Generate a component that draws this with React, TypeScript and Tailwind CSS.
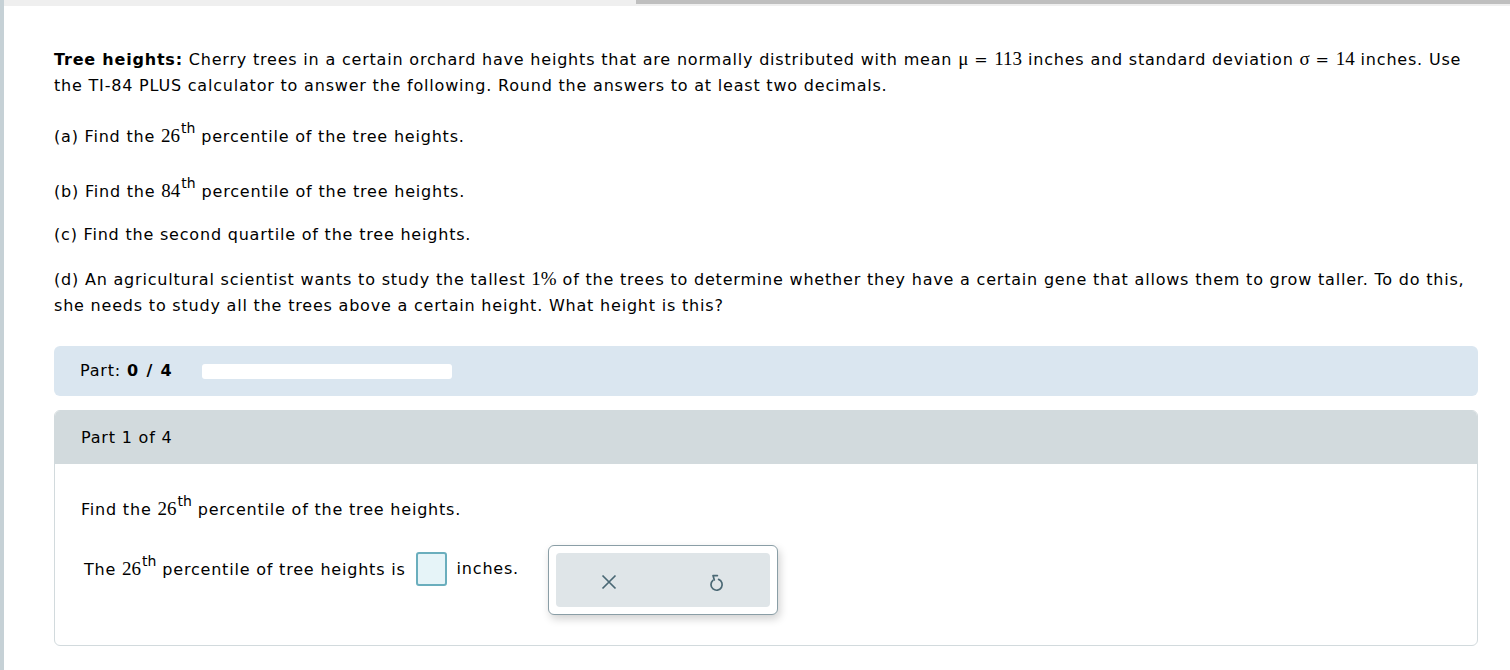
import React from "react";

const sans = { fontFamily: '"DejaVu Sans", Verdana, sans-serif' };

function Num({ children }: { children: React.ReactNode }) {
  return (
    <span className="text-[19px] tracking-normal" style={{ fontFamily: '"Liberation Serif", "Times New Roman", serif' }}>
      {children}
    </span>
  );
}

function Th() {
  return <span className="relative -top-[9px] text-[14px] ml-[1px] tracking-normal">th</span>;
}

function UndoIcon() {
  return (
    <svg width="20" height="22" viewBox="0 0 20 22">
      <path d="M6.9 9.4 A5.6 5.6 0 1 0 12.6 8.4" stroke="#4a6874" strokeWidth="1.7" fill="none" strokeLinecap="round" />
      <path d="M11.4 4.6 H7 L8.3 9" stroke="#4a6874" strokeWidth="1.7" fill="none" strokeLinecap="round" strokeLinejoin="round" />
    </svg>
  );
}

export default function App() {
  return (
    <div className="relative w-[1510px] h-[670px] bg-white overflow-hidden text-[#000]" style={sans}>
      <div className="flex h-full">
        <div className="w-[4px] h-full bg-[#c6d1d6] shrink-0" />
        <div className="flex-1 flex flex-col">
          <div className="h-[6px] bg-[#efefef] flex shrink-0">
            <div className="w-[632px]" />
            <div className="flex-1 h-[4px] bg-[#bfbfbf]" />
          </div>
          <div className="pl-[50px] pr-[32px] pt-[40px] text-[16px] leading-[26px] tracking-[0.8px]">
            <p>
              <b>Tree heights:</b> Cherry trees in a certain orchard have heights that are normally distributed with mean{" "}
              <Num>μ</Num> = <Num>113</Num> inches and standard deviation <Num>σ</Num> = <Num>14</Num> inches. Use the TI-84 PLUS calculator to answer the following. Round the answers to at least two decimals.
            </p>
            <p className="mt-[24px]">
              (a) Find the <Num>26</Num>
              <Th /> percentile of the tree heights.
            </p>
            <p className="mt-[28px]">
              (b) Find the <Num>84</Num>
              <Th /> percentile of the tree heights.
            </p>
            <p className="mt-[17px]">(c) Find the second quartile of the tree heights.</p>
            <p className="mt-[18px]">
              (d) An agricultural scientist wants to study the tallest <Num>1%</Num> of the trees to determine whether they have a certain gene that allows them to grow taller. To do this, she needs to study all the trees above a certain height. What height is this?
            </p>

            <div className="mt-[27px] h-[50px] rounded-[6px] bg-[#dae6f0] flex items-center pl-[26px]">
              <span>
                Part: <b className="tracking-[1.4px]">0 / 4</b>
              </span>
              <div className="ml-[29px] w-[250px] h-[15px] rounded-[3px] bg-white" />
            </div>

            <div className="mt-[14px] rounded-[6px] border border-[#d2dadd] overflow-hidden h-[236px]">
              <div className="h-[53px] bg-[#d2dadd] flex items-center pl-[26px]">Part 1 of 4</div>
              <div className="pl-[26px] pt-[32px]">
                <p>
                  Find the <Num>26</Num>
                  <Th /> percentile of the tree heights.
                </p>
                <div className="mt-[22px] flex items-start">
                  <div className="flex items-center pl-[3px] pt-[7px]">
                    <span>
                      The <Num>26</Num>
                      <Th /> percentile of tree heights is
                    </span>
                    <div className="ml-[10px] w-[31px] h-[34px] rounded-[3px] border-2 border-[#6aaebd] bg-[#e6f4f8]" />
                    <span className="ml-[10px]">inches.</span>
                  </div>
                  <div className="ml-[29px] w-[230px] h-[70px] rounded-[6px] border border-[#8a9ea6] bg-white p-[7px] shadow-[2px_4px_8px_rgba(0,0,0,0.18)]">
                    <div className="h-full rounded-[4px] bg-[#dfe5e8] flex items-center pt-[4px]">
                      <div className="flex-1 flex justify-center">
                        <svg width="20" height="20" viewBox="0 0 20 20">
                          <path d="M3.5 3.5 L16.5 16.5 M16.5 3.5 L3.5 16.5" stroke="#4a6874" strokeWidth="1.7" fill="none" />
                        </svg>
                      </div>
                      <div className="flex-1 flex justify-center">
                        <UndoIcon />
                      </div>
                    </div>
                  </div>
                </div>
              </div>
            </div>
          </div>
        </div>
      </div>
    </div>
  );
}
